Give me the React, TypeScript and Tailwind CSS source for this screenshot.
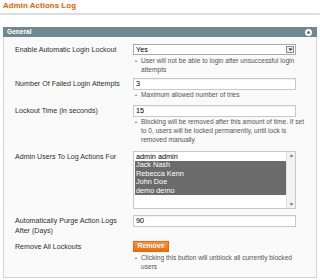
import React from "react";

function Note({ lines, className = "" }: { lines: string[]; className?: string }) {
  return (
    <div className={`flex text-[6.6px] leading-[9px] text-[#555] ${className}`}>
      <span className="w-[8px] shrink-0 pl-[1px] text-[4px] text-[#999]">▲</span>
      <div>
        {lines.map((l) => (
          <div key={l} className="whitespace-nowrap">
            {l}
          </div>
        ))}
      </div>
    </div>
  );
}

function Row({ label, children, className = "" }: { label: React.ReactNode; children: React.ReactNode; className?: string }) {
  return (
    <div className={`grid grid-cols-[118px_163px] items-start ${className}`}>
      <div className="pt-[1px] text-[7.1px] leading-[10px] text-[#2f2f2f]">{label}</div>
      <div>{children}</div>
    </div>
  );
}

function TextBox({ value }: { value: string }) {
  return (
    <div className="h-[12px] w-[163px] border border-[#c8c8c8] bg-white pl-[2px] text-[7.3px] leading-[10px] text-black shadow-[inset_0_1px_1px_rgba(0,0,0,0.06)]">
      {value}
    </div>
  );
}

const users = [
  { name: "admin admin", on: false },
  { name: "Jack Nash", on: true },
  { name: "Rebecca Kenn", on: true },
  { name: "John Doe", on: true },
  { name: "demo demo", on: true },
];

export default function App() {
  return (
    <div className="h-[280px] w-[320px] overflow-hidden bg-white font-['Liberation_Sans',Arial,sans-serif]">
      <div className="h-[13px] px-[3px] pt-[1px] text-[8px] font-bold leading-[10px] text-[#eb5e00]">Admin Actions Log</div>
      <div className="h-[2px] bg-[#dedede]" />

      <div className="mx-[3px] mt-[12px] flex h-[10px] items-center justify-between bg-[#6f8992] pl-[4px] pr-[5px]">
        <span className="text-[6.6px] font-bold leading-[10px] text-white">General</span>
        <span className="flex h-[7px] w-[7px] items-center justify-center rounded-full bg-white">
          <svg width="5" height="4" viewBox="0 0 5 4">
            <path d="M2.5 0.5 L4.5 3.5 L0.5 3.5 Z" fill="#4d5f66" />
          </svg>
        </span>
      </div>

      <div className="mx-[3px] h-[241px] border border-t-0 border-[#d6d6d6] bg-[#fafafa] pl-[11px]">
        <Row label="Enable Automatic Login Lockout" className="pt-[7px]">
          <div className="flex h-[11px] w-[163px] items-center justify-between border border-[#a9a9a9] bg-white pl-[2px] pr-[1px] text-[7.3px] text-black">
            <span className="leading-[9px]">Yes</span>
            <span className="flex h-[7px] w-[8px] items-center justify-center border border-[#8a8a8a] bg-[#eee]">
              <svg width="5" height="3" viewBox="0 0 5 3">
                <path d="M0.5 0.5 L4.5 0.5 L2.5 2.8 Z" fill="#222" />
              </svg>
            </span>
          </div>
          <Note className="mt-[1px]" lines={["User will not be able to login after unsuccessful login", "attempts"]} />
        </Row>

        <Row label="Number Of Failed Login Attempts" className="mt-[4px]">
          <TextBox value="3" />
          <Note lines={["Maximum allowed number of tries"]} className="leading-[8px]" />
        </Row>

        <Row label="Lockout Time (in seconds)" className="mt-[6px]">
          <TextBox value="15" />
          <Note
            lines={[
              "Blocking will be removed after this amount of time. If set",
              "to 0, users will be locked permanently, until lock is",
              "removed manually",
            ]}
          />
        </Row>

        <Row label="Admin Users To Log Actions For" className="mt-[7px]">
          <div className="flex h-[58px] w-[163px] border border-[#c8c8c8] bg-white">
            <div className="flex-1 pl-[1px] pt-[1px] text-[7.3px] leading-[8.4px]">
              {users.map((u) => (
                <div key={u.name} className={u.on ? "bg-[#6b6b6b] pl-[1px] text-white" : "pl-[1px] text-black"}>
                  {u.name}
                </div>
              ))}
            </div>
            <div className="flex w-[9px] flex-col items-center justify-between border-l border-[#e2e2e2] bg-[#f3f3f3] py-[2px]">
              <svg width="5" height="3" viewBox="0 0 5 3">
                <path d="M2.5 0.3 L4.5 2.7 L0.5 2.7 Z" fill="#777" />
              </svg>
              <svg width="5" height="3" viewBox="0 0 5 3">
                <path d="M0.5 0.3 L4.5 0.3 L2.5 2.7 Z" fill="#777" />
              </svg>
            </div>
          </div>
        </Row>

        <Row
          label={
            <>
              Automatically Purge Action Logs
              <br />
              After (Days)
            </>
          }
          className="mt-[6px]"
        >
          <TextBox value="90" />
        </Row>

        <Row label="Remove All Lockouts" className="mt-[5px]">
          <div className="flex h-[11px] w-[36px] items-center justify-center border border-[#e06a0c] bg-gradient-to-b from-[#fb9338] to-[#ee6a06] text-[7px] font-bold text-white">
            Remove
          </div>
          <Note className="mt-[1px]" lines={["Clicking this button will unblock all currently blocked", "users"]} />
        </Row>
      </div>
    </div>
  );
}
